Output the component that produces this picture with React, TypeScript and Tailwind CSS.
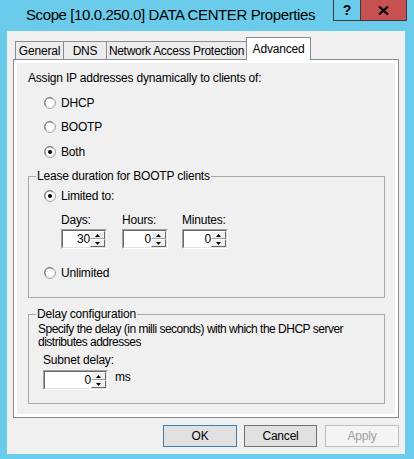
import React from "react";

function Radio({ checked }: { checked?: boolean }) {
  return (
    <svg width="12" height="12" viewBox="0 0 12 12" className="shrink-0">
      <circle cx="6" cy="6" r="5.5" fill="#ffffff" stroke="#a0a0a0" />
      <path d="M2.2 8.8 A4 4 0 0 1 8.8 2.2" fill="none" stroke="#696969" strokeWidth="1" />
      <path d="M9.6 3.2 A4.6 4.6 0 0 1 3.2 9.6" fill="none" stroke="#e3e3e3" strokeWidth="1" />
      {checked && <circle cx="6" cy="6" r="2" fill="#000000" />}
    </svg>
  );
}

function RadioRow({ label, checked, className }: { label: string; checked?: boolean; className?: string }) {
  return (
    <div className={`flex items-center h-[16px] gap-[5px] ${className ?? ""}`}>
      <Radio checked={checked} />
      <span className="leading-[16px] whitespace-nowrap">{label}</span>
    </div>
  );
}

function Spinner({ value, width }: { value: string; width: string }) {
  return (
    <div className={`${width} h-[20px] border border-t-[#a0a0a0] border-l-[#a0a0a0] border-r-white border-b-white`}>
      <div className="w-full h-full border border-t-[#696969] border-l-[#696969] border-r-[#e3e3e3] border-b-[#e3e3e3] bg-white flex">
        <div className="flex-1 text-right leading-[16px]">{value}</div>
        <div className="w-[15px] flex flex-col">
          <div className="h-[8px] bg-[#f0f0f0] border border-t-white border-l-white border-r-[#696969] border-b-[#a0a0a0] flex items-center justify-center">
            <svg width="5" height="3" viewBox="0 0 5 3"><path d="M2.5 0 L5 3 L0 3 Z" fill="#000" /></svg>
          </div>
          <div className="h-[8px] bg-[#f0f0f0] border border-t-white border-l-white border-r-[#696969] border-b-[#696969] flex items-center justify-center">
            <svg width="5" height="3" viewBox="0 0 5 3"><path d="M0 0 L5 0 L2.5 3 Z" fill="#000" /></svg>
          </div>
        </div>
      </div>
    </div>
  );
}

function GroupBox({ title, className, children }: { title: string; className?: string; children: React.ReactNode }) {
  return (
    <div className={`relative border border-[#a8a8a8] ${className ?? ""}`}>
      <span className="absolute left-[7px] -top-[9px] px-[1px] bg-[#f0f0f0] leading-[16px] whitespace-nowrap">{title}</span>
      {children}
    </div>
  );
}

export default function App() {
  return (
    <div className="w-[414px] h-[459px] bg-[#6bcbea] flex flex-col font-['Liberation_Sans',Arial,sans-serif] text-[12px] tracking-[-0.2px] text-black overflow-hidden">
      {/* Title bar */}
      <div className="h-[31px] flex items-start shrink-0">
        <span className="pl-[26px] pt-[6px] text-[15px] tracking-[-0.4px] leading-[18px] whitespace-nowrap">
          Scope [10.0.250.0] DATA CENTER Properties
        </span>
        <div className="ml-auto mr-[7px] flex">
          <div className="w-[28px] h-[21px] border border-t-0 border-[#3a3a3a] flex items-center justify-center font-bold text-[14px] leading-none">
            ?
          </div>
          <div className="w-[47px] h-[21px] -ml-px border border-t-0 border-[#3a3a3a] bg-[#c75050] flex items-center justify-center">
            <svg width="11" height="9" viewBox="0 0 11 9">
              <path d="M1 0.5 L10 8.5 M10 0.5 L1 8.5" stroke="#000" strokeWidth="2.2" />
            </svg>
          </div>
        </div>
      </div>

      {/* Client area */}
      <div className="ml-[7px] w-[398px] h-[423px] bg-[#f0f0f0] flex flex-col pl-[6px] pt-[6px] shrink-0">
        {/* Tabs */}
        <div className="flex items-end h-[22px] pl-[2px] relative z-10 whitespace-nowrap">
          <div className="w-[49px] h-[18px] border border-b-0 border-[#898c95] bg-[#ececec] flex items-center justify-center leading-[16px]">General</div>
          <div className="w-[44px] h-[18px] -ml-px border border-b-0 border-[#898c95] bg-[#ececec] flex items-center justify-center leading-[16px]">DNS</div>
          <div className="w-[141px] h-[18px] -ml-px border border-b-0 border-[#898c95] bg-[#ececec] flex items-center justify-center leading-[16px] tracking-[-0.3px]">Network Access Protection</div>
          <div className="w-[65px] h-[23px] -ml-px -mb-px border border-b-0 border-[#898c95] bg-white flex items-center justify-center leading-[16px]">Advanced</div>
        </div>

        {/* Tab panel */}
        <div className="w-[386px] h-[359px] border border-[#898c95] bg-white p-[3px]">
          <div className="w-full h-full bg-[#f0f0f0] flex flex-col pl-[11px]">
            <div className="mt-[7px] leading-[16px] whitespace-nowrap">Assign IP addresses dynamically to clients of:</div>
            <RadioRow label="DHCP" className="mt-[9px] ml-[16px]" />
            <RadioRow label="BOOTP" className="mt-[8px] ml-[16px]" />
            <RadioRow label="Both" checked className="mt-[9px] ml-[16px]" />

            <GroupBox title="Lease duration for BOOTP clients" className="mt-[16px] w-[357px] h-[122px]">
              <div className="flex flex-col pl-[15px]">
                <RadioRow label="Limited to:" checked className="mt-[11px]" />
                <div className="flex mt-[8px] pl-[17px]">
                  <div className="w-[61px] flex flex-col">
                    <span className="leading-[16px]">Days:</span>
                    <div className="mt-[1px]"><Spinner value="30" width="w-[46px]" /></div>
                  </div>
                  <div className="w-[60px] flex flex-col">
                    <span className="leading-[16px]">Hours:</span>
                    <div className="mt-[1px]"><Spinner value="0" width="w-[46px]" /></div>
                  </div>
                  <div className="flex flex-col">
                    <span className="leading-[16px]">Minutes:</span>
                    <div className="mt-[1px]"><Spinner value="0" width="w-[46px]" /></div>
                  </div>
                </div>
                <RadioRow label="Unlimited" className="mt-[16px]" />
              </div>
            </GroupBox>

            <GroupBox title="Delay configuration" className="mt-[16px] w-[357px] h-[90px]">
              <div className="flex flex-col">
                <div className="mt-[8px] pl-[9px] leading-[13px] whitespace-nowrap tracking-[-0.5px]">
                  Specify the delay (in milli seconds) with which the DHCP server
                  <br />
                  distributes addresses
                </div>
                <div className="mt-[3px] pl-[14px] leading-[16px]">Subnet delay:</div>
                <div className="mt-[2px] pl-[14px] flex items-start">
                  <Spinner value="0" width="w-[65px]" />
                  <span className="ml-[7px] -mt-[1px] leading-[16px]">ms</span>
                </div>
              </div>
            </GroupBox>
          </div>
        </div>

        {/* Buttons */}
        <div className="w-[386px] flex justify-end mt-[7px]">
          <div className="w-[74px] h-[22px] border border-[#3c7fb1] bg-[#e1e1e1] flex items-center justify-center leading-[16px]">OK</div>
          <div className="w-[73px] h-[22px] ml-[7px] border border-[#707070] bg-[#e1e1e1] flex items-center justify-center leading-[16px]">Cancel</div>
          <div className="w-[74px] h-[22px] ml-[8px] border border-[#bfbfbf] bg-[#f4f4f4] text-[#a0a0a0] flex items-center justify-center leading-[16px]">Apply</div>
        </div>
      </div>
    </div>
  );
}
